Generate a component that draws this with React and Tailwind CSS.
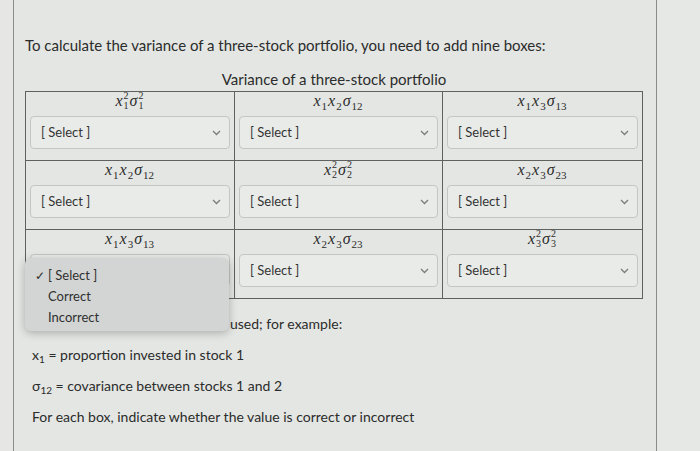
import React from "react";

const serif = { fontFamily: '"Liberation Serif", "DejaVu Serif", serif' };

const Chevron = () => (
  <svg width="9" height="6" viewBox="0 0 9 6" className="shrink-0">
    <path d="M1 1l3.5 3.5L8 1" fill="none" stroke="#7a7c7b" strokeWidth="1.3" />
  </svg>
);

const Stack = ({ i }) => (
  <span className="inline-flex flex-col text-[10px] leading-[10px] not-italic ml-[1px] mr-[1px]">
    <span>2</span>
    <span>{i}</span>
  </span>
);

// x_i^2 sigma_i^2 style term
const SqTerm = ({ i }) => (
  <span className="inline-flex items-center italic text-[16px] leading-[18px]" style={serif}>
    <span>x</span>
    <Stack i={i} />
    <span>σ</span>
    <Stack i={i} />
  </span>
);

const Sub = ({ children }) => (
  <span className="not-italic text-[11px] leading-[11px] ml-[1px] mr-[1px] self-end mb-[-2px]">{children}</span>
);

const CrossTerm = ({ a, b }) => (
  <span className="inline-flex items-center italic text-[16px] leading-[18px]" style={serif}>
    <span>x</span>
    <Sub>{a}</Sub>
    <span>x</span>
    <Sub>{b}</Sub>
    <span>σ</span>
    <Sub>
      {a}
      {b}
    </Sub>
  </span>
);

const SelectBox = ({ hidden }) => (
  <div className="h-[33px] flex items-center justify-between pl-[10px] pr-[8px] bg-[#e9ebe9] border border-[#c4c6c4] rounded-[4px] text-[13px] text-[#333433]">
    <span className={hidden ? "invisible" : ""}>[ Select ]</span>
    <Chevron />
  </div>
);

const Cell = ({ label, last, hidden }) => (
  <div className={`px-[4px] pb-[11px] ${last ? "" : "border-r border-[#5f615f]"}`}>
    <div className="h-[18px] flex items-center justify-center text-[#2c2c2c] mb-[6px]">{label}</div>
    <SelectBox hidden={hidden} />
  </div>
);

const rows = [
  [<SqTerm i="1" />, <CrossTerm a="1" b="2" />, <CrossTerm a="1" b="3" />],
  [<CrossTerm a="1" b="2" />, <SqTerm i="2" />, <CrossTerm a="2" b="3" />],
  [<CrossTerm a="1" b="3" />, <CrossTerm a="2" b="3" />, <SqTerm i="3" />],
];

export default function App() {
  return (
    <div
      className="w-[700px] h-[451px] bg-[#e1e3e0] flex overflow-hidden relative text-[#2b2c2b]"
      style={{ fontFamily: "Lato, 'Open Sans', sans-serif" }}
    >
      <div className="w-[14px] shrink-0 bg-[#e6e7e5] border-r border-[#8a8c8a]" />
      <div className="w-[643px] shrink-0 border-r border-[#8a8c8a] bg-[#e4e6e3] pl-[11px] pr-[13px] pt-[35px]">
        <p className="text-[15px] leading-[20px]">
          To calculate the variance of a three-stock portfolio, you need to add nine boxes:
        </p>
        <p className="text-[15px] leading-[20px] text-center mt-[14px]">
          Variance of a three-stock portfolio
        </p>
        <div className="border border-[#5f615f] mt-[2px]">
          {rows.map((r, ri) => (
            <div
              key={ri}
              className={`grid grid-cols-[209px_208px_1fr] ${ri < 2 ? "border-b border-[#5f615f]" : ""}`}
            >
              {r.map((lab, ci) => (
                <Cell key={ci} label={lab} last={ci === 2} hidden={ri === 2 && ci === 0} />
              ))}
            </div>
          ))}
        </div>
        <p className="text-[14px] leading-[20px] pl-[205px] mt-[15px]">used; for example:</p>
        <div className="pl-[7px] text-[14px] leading-[20px]">
          <p className="mt-[11px]">
            x<sub className="text-[10px]">1</sub> = proportion invested in stock 1
          </p>
          <p className="mt-[11px]">
            σ<sub className="text-[10px]">12</sub> = covariance between stocks 1 and 2
          </p>
          <p className="mt-[11px]">For each box, indicate whether the value is correct or incorrect</p>
        </div>
      </div>
      <div className="flex-1 bg-[#e6e8e5]" />

      <div className="absolute left-[25px] top-[258px] w-[204px] h-[73px] bg-[#d3d5d4] rounded-[6px] shadow-[0_2px_8px_rgba(0,0,0,0.25)] pt-[7px] text-[13px] leading-[21px] text-[#2f302f]">
        <div className="flex items-center">
          <span className="w-[23px] text-right pr-[3px] text-[12px]">✓</span>
          <span>[ Select ]</span>
        </div>
        <div className="pl-[23px]">Correct</div>
        <div className="pl-[23px]">Incorrect</div>
      </div>
    </div>
  );
}
